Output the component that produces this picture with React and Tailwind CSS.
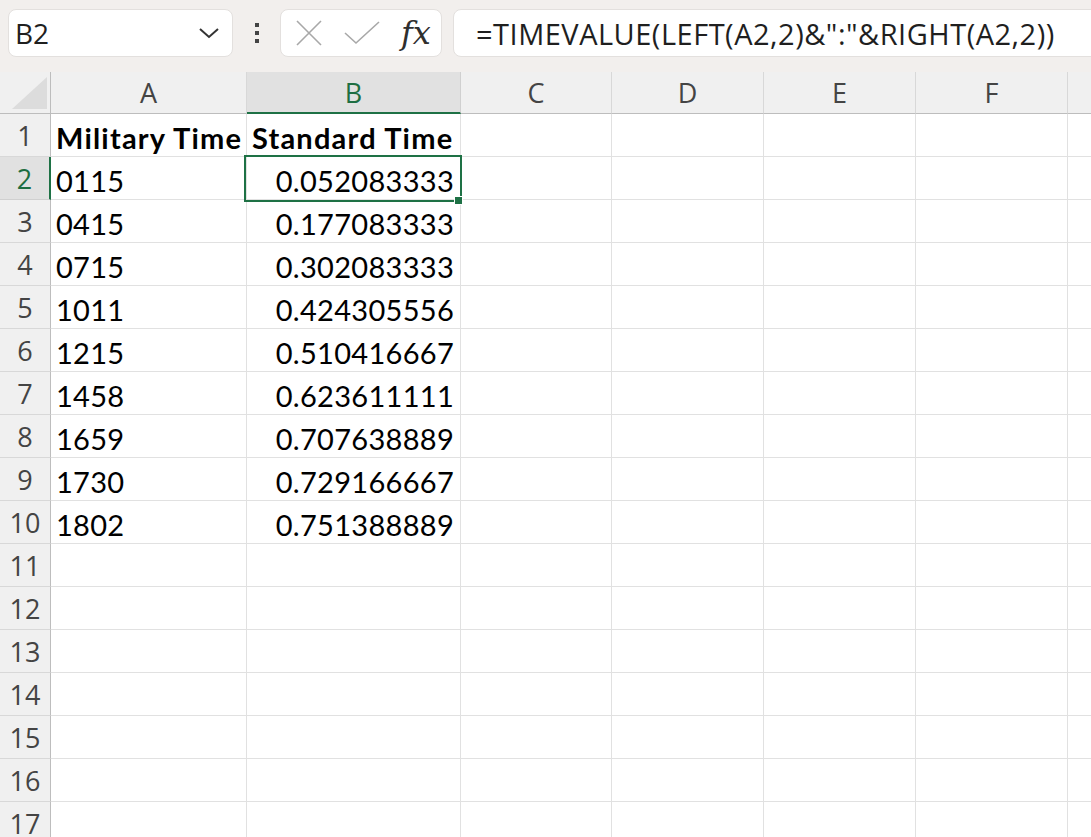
import React from "react";

const UI = { fontFamily: '"Open Sans", "Noto Sans", sans-serif' };
const CELL = { fontFamily: 'Lato, "Liberation Sans", sans-serif' };

const data = [
  ["0115", "0.052083333"],
  ["0415", "0.177083333"],
  ["0715", "0.302083333"],
  ["1011", "0.424305556"],
  ["1215", "0.510416667"],
  ["1458", "0.623611111"],
  ["1659", "0.707638889"],
  ["1730", "0.729166667"],
  ["1802", "0.751388889"],
];

const cols = [
  { l: "A", w: "w-[196px]" },
  { l: "B", w: "w-[214px]" },
  { l: "C", w: "w-[151px]" },
  { l: "D", w: "w-[152px]" },
  { l: "E", w: "w-[152px]" },
  { l: "F", w: "w-[152px]" },
  { l: "", w: "w-[60px]" },
];

function Toolbar() {
  return (
    <div className="h-[72px] bg-[#f2efed] flex items-start pt-[9px] overflow-hidden" style={UI}>
      <div className="ml-[8px] w-[225px] h-[48px] bg-white border border-[#e3e0de] rounded-[8px] flex items-center justify-between pl-[6px] pr-[12px] shrink-0">
        <span className="text-[28px] text-[#1f1f1f] leading-none">B2</span>
        <svg width="22" height="14" viewBox="0 0 22 14">
          <path d="M2 3 L11 11 L20 3" fill="none" stroke="#333" strokeWidth="2" />
        </svg>
      </div>
      <div className="w-[47px] h-[48px] flex flex-col items-center justify-center gap-[4px] shrink-0">
        <div className="w-[4px] h-[4px] bg-[#444]" />
        <div className="w-[4px] h-[4px] bg-[#444]" />
        <div className="w-[4px] h-[4px] bg-[#444]" />
      </div>
      <div className="w-[162px] h-[48px] bg-white border border-[#e3e0de] rounded-[8px] flex items-center shrink-0">
        <svg width="28" height="28" viewBox="0 0 28 28" className="ml-[14px]">
          <path d="M2 2 L26 26 M26 2 L2 26" stroke="#a8a8a8" strokeWidth="1.6" fill="none" />
        </svg>
        <svg width="38" height="26" viewBox="0 0 38 26" className="ml-[20px]">
          <path d="M2 13 L13 23 L36 2" stroke="#a8a8a8" strokeWidth="1.6" fill="none" />
        </svg>
        <span
          className="ml-[20px] text-[32px] italic text-[#2f2f2f] leading-none"
          style={{ fontFamily: '"DejaVu Serif", "Liberation Serif", serif' }}
        >
          fx
        </span>
      </div>
      <div className="ml-[11px] w-[700px] h-[48px] bg-white border border-[#e3e0de] rounded-[8px] flex items-center pl-[22px] shrink-0">
        <span className="text-[29px] tracking-[0.5px] text-[#1f1f1f] leading-none whitespace-nowrap">
          =TIMEVALUE(LEFT(A2,2)&amp;":"&amp;RIGHT(A2,2))
        </span>
      </div>
    </div>
  );
}

function HeaderRow() {
  return (
    <div className="flex h-[42px]" style={UI}>
      <div className="w-[51px] h-[42px] shrink-0 bg-[#f0f0f0] border-r border-b border-[#bdbdbd] relative">
        <svg width="36" height="33" viewBox="0 0 36 33" className="absolute left-[12px] top-[5px]">
          <path d="M0 32 L35 0 L35 32 Z" fill="#dcdcdc" />
        </svg>
      </div>
      {cols.map((c, i) => {
        const sel = c.l === "B";
        return (
          <div
            key={i}
            className={`${c.w} h-[42px] shrink-0 flex items-center justify-center text-[27px] leading-none border-r ${
              sel
                ? "bg-[#e1e1e1] text-[#1e6e42] border-b-[2px] border-b-[#1e7145] border-r-[#d0d0d0]"
                : "bg-[#f0f0f0] text-[#444] border-b border-b-[#bdbdbd] border-r-[#d8d8d8]"
            }`}
          >
            {c.l}
          </div>
        );
      })}
    </div>
  );
}

function Row({ n, a, b, bold }) {
  const sel = n === 2;
  return (
    <div className="flex h-[43px]">
      <div
        className={`w-[51px] h-[43px] shrink-0 flex items-center justify-center text-[27px] leading-none border-b ${
          sel
            ? "bg-[#e1e1e1] text-[#1e6e42] border-r-[2px] border-r-[#1e7145] border-b-[#d0d0d0]"
            : "bg-[#f0f0f0] text-[#444] border-r border-r-[#bdbdbd] border-b-[#d8d8d8]"
        }`}
        style={UI}
      >
        {n}
      </div>
      {cols.map((c, i) => (
        <div
          key={i}
          className={`${c.w} h-[43px] shrink-0 bg-white border-r border-b border-[#e1e1e1] flex items-end pb-[4px] text-[29px] leading-none text-black whitespace-nowrap ${
            i === 1 && !bold ? "justify-end pr-[6px]" : "pl-[5px]"
          } ${bold ? "font-bold tracking-[1.2px]" : "tracking-[0.3px]"}`}
          style={CELL}
        >
          {i === 0 ? a : i === 1 ? b : ""}
        </div>
      ))}
    </div>
  );
}

export default function App() {
  const rows = [];
  rows.push(<Row key={1} n={1} a="Military Time" b="Standard Time" bold />);
  data.forEach((d, i) => rows.push(<Row key={i + 2} n={i + 2} a={d[0]} b={d[1]} />));
  for (let n = 11; n <= 17; n++) rows.push(<Row key={n} n={n} a="" b="" />);
  return (
    <div className="w-[1091px] h-[837px] overflow-hidden bg-white relative">
      <Toolbar />
      <div className="relative">
        <HeaderRow />
        {rows}
        <div className="absolute left-[244px] top-[83px] w-[218px] h-[47px] border-[2px] border-[#1e7145] pointer-events-none" />
        <div className="absolute left-[454px] top-[124px] w-[9px] h-[9px] bg-[#1e7145] border border-white pointer-events-none" />
      </div>
    </div>
  );
}
